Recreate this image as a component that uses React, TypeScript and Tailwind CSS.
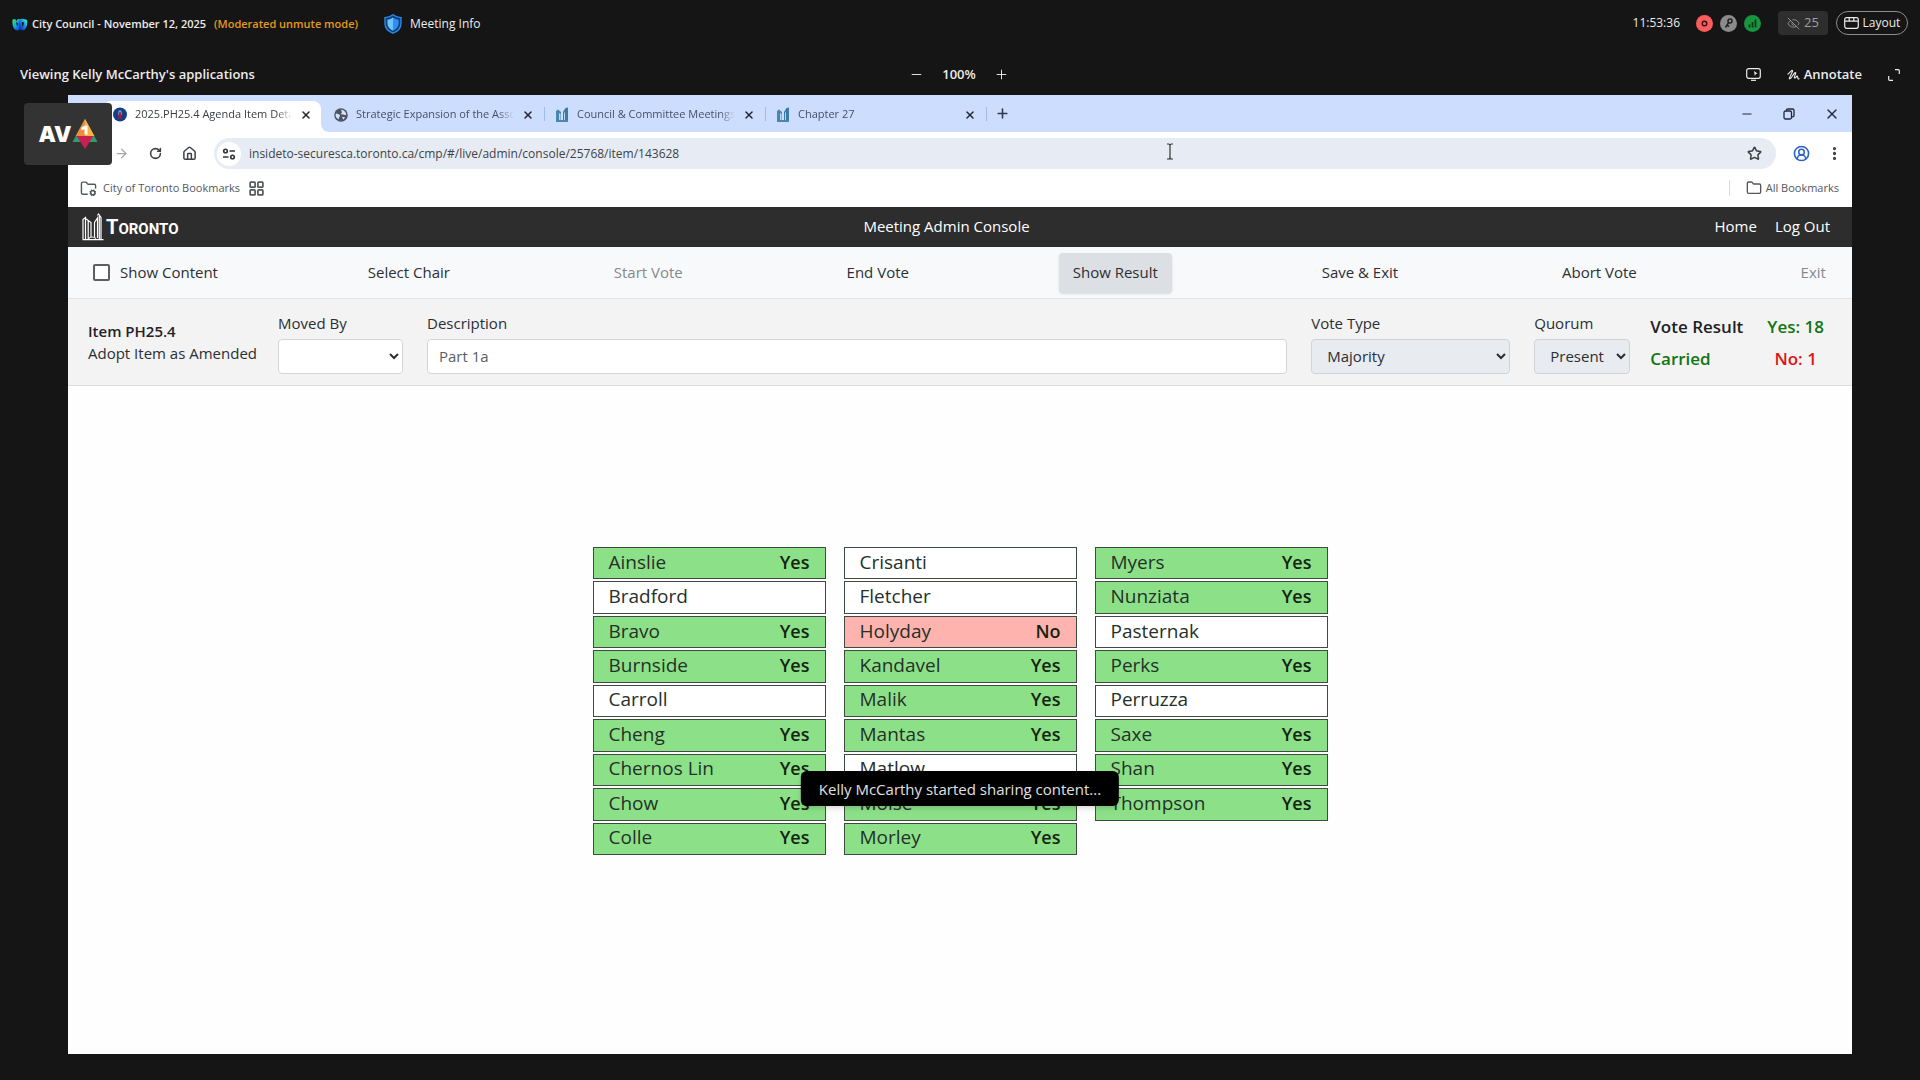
import type { ReactNode } from "react";
import {
  ArrowLeft,
  ArrowRight,
  CircleUserRound,
  EllipsisVertical,
  EyeOff,
  Folder,
  FolderCog,
  House,
  LayoutGrid,
  Minus,
  Plus,
  RotateCw,
  Star,
  X,
} from "lucide-react";

type Vote = "Yes" | "No" | "";

interface Member {
  name: string;
  vote: Vote;
}

const columns: Member[][] = [
  [
    { name: "Ainslie", vote: "Yes" },
    { name: "Bradford", vote: "" },
    { name: "Bravo", vote: "Yes" },
    { name: "Burnside", vote: "Yes" },
    { name: "Carroll", vote: "" },
    { name: "Cheng", vote: "Yes" },
    { name: "Chernos Lin", vote: "Yes" },
    { name: "Chow", vote: "Yes" },
    { name: "Colle", vote: "Yes" },
  ],
  [
    { name: "Crisanti", vote: "" },
    { name: "Fletcher", vote: "" },
    { name: "Holyday", vote: "No" },
    { name: "Kandavel", vote: "Yes" },
    { name: "Malik", vote: "Yes" },
    { name: "Mantas", vote: "Yes" },
    { name: "Matlow", vote: "" },
    { name: "Moise", vote: "Yes" },
    { name: "Morley", vote: "Yes" },
  ],
  [
    { name: "Myers", vote: "Yes" },
    { name: "Nunziata", vote: "Yes" },
    { name: "Pasternak", vote: "" },
    { name: "Perks", vote: "Yes" },
    { name: "Perruzza", vote: "" },
    { name: "Saxe", vote: "Yes" },
    { name: "Shan", vote: "Yes" },
    { name: "Thompson", vote: "Yes" },
  ],
];

const voteColors: Record<Vote, string> = {
  Yes: "bg-[#8ce188]",
  No: "bg-[#ffb3ae]",
  "": "bg-white",
};

function WebexLogo() {
  return (
    <svg width="16" height="13" viewBox="0 0 16 13" aria-hidden="true">
      <defs>
        <linearGradient id="wbxA" x1="0" y1="0" x2="1" y2="1">
          <stop offset="0" stopColor="#35d07f" />
          <stop offset="0.45" stopColor="#12a4e8" />
          <stop offset="1" stopColor="#0b46d8" />
        </linearGradient>
        <linearGradient id="wbxB" x1="1" y1="0" x2="0" y2="1">
          <stop offset="0" stopColor="#2ee0c0" />
          <stop offset="0.5" stopColor="#1d7bf0" />
          <stop offset="1" stopColor="#0a35b8" />
        </linearGradient>
      </defs>
      <path d="M2.200 3C2.300 8 4 10.500 5.400 10.500S7.600 8.200 7.800 5.500S6.800 2.500 6.200 3.200" fill="none" stroke="url(#wbxA)" strokeWidth="3.800" strokeLinecap="round" />
      <path d="M13.600 3.200C13.700 8 12 10.500 10.600 10.500S8.400 8 8.200 5.500S9.200 2.200 10.600 2.400S12.500 3 13.600 3.200" fill="none" stroke="url(#wbxB)" strokeWidth="3.400" strokeLinecap="round" />
    </svg>
  );
}

function ShieldIcon() {
  return (
    <svg width="18" height="20" viewBox="0 0 18 20" aria-hidden="true">
      <path d="M9 .8C11.500 2.600 14 3.500 17 3.700V9.500C17 14 13.500 17.500 9 19.200C4.500 17.500 1 14 1 9.500V3.700C4 3.500 6.500 2.600 9 .8Z" fill="#0f3f78" stroke="#2f8ff0" strokeWidth="1.300" />
      <path d="M9 3.500C10.800 4.800 12.600 5.500 14.600 5.700V9.500C14.600 12.800 12.300 15.300 9 16.700Z" fill="#2f8df5" />
      <path d="M9 3.500C7.200 4.800 5.400 5.500 3.400 5.700V9.500C3.400 12.800 5.700 15.300 9 16.700Z" fill="#6cc4fb" />
    </svg>
  );
}

function Av1Mark() {
  return (
    <svg width="26" height="30" viewBox="0 0 26 30" className="shrink-0" aria-hidden="true">
      <path d="M13 0L25.500 23H.5Z" fill="#2f9e6e" />
      <path d="M13 0L22.300 17H3.700Z" fill="#f08c3a" />
      <path d="M13 0L22.300 17H13Z" fill="#f7b53d" />
      <path d="M4.500 17H21.500L13 30Z" fill="#c8214f" />
      <path d="M9.500 8.500L13 6.500H15.500V15.500H12.500V10L9.500 11.200Z" fill="#fff" />
    </svg>
  );
}

// City hall towers, used for the header logo
function Towers({ className }: { className: string }) {
  return (
    <svg viewBox="0 0 22 28" fill="none" stroke="currentColor" className={className} aria-hidden="true">
      <path d="M1 26V6.500L3.500 4.500V26M3.500 5.500L9 9.500V24M6.200 8V26" strokeWidth="1.200" />
      <path d="M12.500 24V9.500L15.500 5V25M15.500 2.500L16.500 1L19 4.500V26M17.300 3V26" strokeWidth="1.200" />
      <path d="M.5 26.700H21.500M6.500 25.500Q10 22.500 14 25.500" strokeWidth="1.200" />
    </svg>
  );
}

function TorontoFavicon() {
  return (
    <svg width="14" height="15" viewBox="0 0 14 15" aria-hidden="true">
      <path d="M1 14V4L3 2.500L6 5V14Z" fill="#4a87b0" />
      <path d="M8 14V5L10.500 1L13 .5V14Z" fill="#3d7ba6" />
      <path d="M4 6L5.500 7V13H4ZM9 6L10 5V13H9Z" fill="#b9d4ee" />
      <path d="M1 13H13V15H1Z" fill="#4a87b0" />
    </svg>
  );
}

function CrestFavicon() {
  return (
    <svg width="15" height="15" viewBox="0 0 15 15" aria-hidden="true">
      <circle cx="7.500" cy="7.500" r="7.500" fill="#123f86" />
      <path d="M5.500 4.500Q7.500 1.500 9.500 4.500V8H5.500Z" fill="#7f93bd" />
      <path d="M6.500 5H8.500V8Q10 9 9.500 11Q7.500 13 5.500 11Q5 9 6.500 8Z" fill="#b3123c" />
    </svg>
  );
}

function GlobeFavicon() {
  return (
    <svg width="14" height="14" viewBox="0 0 14 14" aria-hidden="true">
      <circle cx="7" cy="7" r="6.800" fill="#4c5563" />
      <path d="M2 5.500C4 6 6 6 6 7.500S4.500 9 5 11.500C3 11 1.500 9 1.500 7ZM7 1.800C9.500 1.500 12 4 12.300 6.500C11 8 10 6 8.500 6.500S6.500 5 8 4.500ZM8 9H11L9.500 11.800Z" fill="#d3e2fb" />
    </svg>
  );
}

function SiteSettingsIcon() {
  return (
    <svg width="14" height="12" viewBox="0 0 14 12" fill="none" stroke="#30343a" strokeWidth="1.600" aria-hidden="true">
      <circle cx="3.500" cy="3" r="1.800" />
      <path d="M7.500 3H13M1 9H6.500" />
      <circle cx="10.500" cy="9" r="1.800" />
    </svg>
  );
}

interface TabProps {
  icon: ReactNode;
  title: string;
  active?: boolean;
}

function BrowserTab({ icon, title, active }: TabProps) {
  return (
    <div
      className={
        active
          ? "relative mr-[3px] flex w-[218px] items-center rounded-t-lg bg-white pr-[9px] pb-1 pl-2.5 text-[#3a3d42]"
          : "relative flex w-[221px] items-center pr-[11px] pb-1 pl-2.5 text-[#42526b]"
      }
    >
      <span className="flex w-[14px] shrink-0 justify-center">{icon}</span>
      <span className="ml-2 min-w-0 flex-1 overflow-hidden text-[11px] whitespace-nowrap [mask-image:linear-gradient(to_right,#000_90%,transparent)]">
        {title}
      </span>
      <button type="button" aria-label={`Close ${title}`} className="ml-2 text-[#23272e]">
        <X size={12} strokeWidth={3} />
      </button>
      {active ? (
        <svg width="9" height="9" viewBox="0 0 9 9" className="absolute bottom-0 left-full" aria-hidden="true">
          <path d="M0 0Q0 9 9 9H0Z" fill="#fff" />
        </svg>
      ) : (
        <span className="absolute top-1.5 right-0 h-[14px] w-px bg-[#9fbbe8]" />
      )}
    </div>
  );
}

function MeetingBar() {
  return (
    <header className="flex h-[46px] items-center justify-between px-3 pt-0.5 text-xs font-medium text-[#ececec]">
      <div className="flex items-center">
        <WebexLogo />
        <span className="ml-1 text-[11px] font-semibold">City Council - November 12, 2025</span>
        <span className="ml-2 text-[11px] font-semibold text-[#e39a1c]">(Moderated unmute mode)</span>
        <button type="button" className="ml-[26px] flex items-center gap-2">
          <ShieldIcon />
          Meeting Info
        </button>
      </div>
      <div className="flex items-center pb-0.5">
        <span>11:53:36</span>
        <span className="ml-4 flex gap-[7px]">
          <svg width="17" height="17" viewBox="0 0 17 17" aria-label="Recording">
            <circle cx="8.500" cy="8.500" r="8.500" fill="#fb5c5c" />
            <circle cx="8.500" cy="8.500" r="2.300" fill="none" stroke="#3a1010" strokeWidth="1.400" />
          </svg>
          <svg width="17" height="17" viewBox="0 0 17 17" aria-label="Encryption">
            <circle cx="8.500" cy="8.500" r="8.500" fill="#8b8b8b" />
            <circle cx="10" cy="6" r="2" fill="none" stroke="#222" strokeWidth="1.500" />
            <path d="M8.700 7.500L5.500 12.500M7 10.200L9 11.500" stroke="#222" strokeWidth="1.500" />
          </svg>
          <svg width="17" height="17" viewBox="0 0 17 17" aria-label="Network">
            <circle cx="8.500" cy="8.500" r="8.500" fill="#17953f" />
            <path d="M5.500 12.500V9.500M8.500 12.500V7M11.500 12.500V4.500" stroke="#0a3517" strokeWidth="1.700" />
          </svg>
        </span>
        <button type="button" className="ml-[17px] flex h-6 w-[50px] items-center justify-center gap-1 rounded bg-[#2e2e2e] text-[13px] font-normal text-[#a0a0a0]">
          <EyeOff size={13} strokeWidth={1.5} />
          25
        </button>
        <button type="button" className="ml-2 flex h-6 w-[72px] items-center justify-center gap-1 rounded-full border border-[#8c8c8c]">
          <svg width="15" height="12" viewBox="0 0 15 12" fill="none" stroke="currentColor" strokeWidth="1.200" aria-hidden="true">
            <rect x="0.700" y="0.700" width="13.600" height="10.600" rx="2" />
            <path d="M.7 4.200H14.300M5.200 .7V4.200M9.800 .7V4.200" />
          </svg>
          Layout
        </button>
      </div>
    </header>
  );
}

function ShareBar() {
  return (
    <div className="grid h-[49px] grid-cols-3 items-center px-5 pt-2 text-[13px] font-semibold text-[#ececec]">
      <span>Viewing Kelly McCarthy's applications</span>
      <div className="flex items-center justify-center gap-[18px] pr-0.5">
        <button type="button" aria-label="Zoom out">
          <Minus size={15} strokeWidth={1.5} />
        </button>
        100%
        <button type="button" aria-label="Zoom in">
          <Plus size={15} strokeWidth={1.5} />
        </button>
      </div>
      <div className="flex items-center justify-end">
        <button type="button" aria-label="Display options">
          <svg width="15" height="13" viewBox="0 0 15 13" fill="none" stroke="currentColor" strokeWidth="1.200" aria-hidden="true">
            <rect x="0.700" y="0.700" width="13.600" height="9.600" rx="2" />
            <path d="M5 12.300H10" />
            <path d="M8 3L11.500 5.500L9.800 6L8.800 8Z" fill="currentColor" stroke="none" />
          </svg>
        </button>
        <button type="button" className="ml-[26px] flex items-center gap-1">
          <svg width="13" height="12" viewBox="0 0 14 12" fill="none" stroke="currentColor" strokeWidth="1.200" strokeLinecap="round" strokeLinejoin="round" aria-hidden="true">
            <path d="M1 5L5 1.200C6.500 .5 6 2 5.500 3L2.500 9.500C2.500 11 4 9.500 5 8.200L8 4C9.500 2.700 9.800 3.800 9 5L8 8C7.500 9.800 9 9.500 10 8S11.500 7.500 11.500 8.500S12 10.500 13 10" />
          </svg>
          Annotate
        </button>
        <button type="button" aria-label="Full screen" className="ml-[26px]">
          <svg width="12" height="12" viewBox="0 0 12 12" fill="none" stroke="currentColor" strokeWidth="1.200" aria-hidden="true">
            <path d="M7 .7H10.300Q11.300 .7 11.300 1.700V5M.7 7V10.300Q.7 11.300 1.700 11.300H5" />
          </svg>
        </button>
      </div>
    </div>
  );
}

function BrowserChrome() {
  return (
    <div>
      <div className="flex h-[37px] items-stretch bg-[#cdddfd] pt-1.5 pl-[35px]">
        <BrowserTab active icon={<CrestFavicon />} title="2025.PH25.4 Agenda Item Details" />
        <BrowserTab icon={<GlobeFavicon />} title="Strategic Expansion of the Association" />
        <BrowserTab icon={<TorontoFavicon />} title="Council & Committee Meetings" />
        <BrowserTab icon={<TorontoFavicon />} title="Chapter 27" />
        <button type="button" aria-label="New tab" className="ml-2 pb-1.5 text-[#2c3a52]">
          <Plus size={15} strokeWidth={2.5} />
        </button>
        <div className="ml-auto flex items-center gap-[29px] pr-3 pb-1.5 text-[#1f2a3d]">
          <button type="button" aria-label="Minimize">
            <Minus size={14} strokeWidth={2} />
          </button>
          <button type="button" aria-label="Restore">
            <svg width="12" height="12" viewBox="0 0 12 12" fill="none" stroke="currentColor" strokeWidth="1.300" aria-hidden="true">
              <rect x="1" y="3" width="7.500" height="8" rx="1.500" />
              <path d="M3.500 3V2.200Q3.500 1 4.700 1H9.500Q11 1 11 2.500V7.500Q11 9 8.500 9" />
            </svg>
          </button>
          <button type="button" aria-label="Close window">
            <X size={16} strokeWidth={2} />
          </button>
        </div>
      </div>

      <div className="flex h-[43px] items-center bg-white px-0.5 text-[#3c4043]">
        <button type="button" aria-label="Back" className="flex w-[34px] justify-center">
          <ArrowLeft size={15} />
        </button>
        <button type="button" aria-label="Forward" className="flex w-[34px] justify-center text-[#a3a6aa]">
          <ArrowRight size={15} />
        </button>
        <button type="button" aria-label="Reload" className="flex w-[34px] justify-center">
          <RotateCw size={13} strokeWidth={2.8} />
        </button>
        <button type="button" aria-label="Home page" className="flex w-[34px] justify-center">
          <House size={15} strokeWidth={2.4} />
        </button>
        <div className="relative ml-2 flex h-[31px] flex-1 items-center rounded-full bg-[#e7ecf4] pr-[14px] pl-[3px]">
          <button type="button" aria-label="Site settings" className="flex size-6 items-center justify-center rounded-full bg-white">
            <SiteSettingsIcon />
          </button>
          <input
            aria-label="Address"
            className="ml-2 flex-1 bg-transparent text-xs text-[#3f4347] outline-none"
            defaultValue="insideto-securesca.toronto.ca/cmp/#/live/admin/console/25768/item/143628"
          />
          <button type="button" aria-label="Bookmark this page">
            <Star size={15} strokeWidth={2.4} />
          </button>
          <svg width="8" height="17" viewBox="0 0 8 17" fill="none" stroke="#333" strokeWidth="1.200" className="absolute top-[5px] left-[952px]" aria-hidden="true">
            <path d="M1 1H2.500Q4 1 4 2.500V14.500Q4 16 2.500 16H1M7 1H5.500Q4 1 4 2.500M4 14.500Q4 16 5.500 16H7" />
          </svg>
        </div>
        <button type="button" aria-label="Profile" className="ml-2 flex w-[34px] justify-center text-[#2a63c4]">
          <CircleUserRound size={17} strokeWidth={2.2} />
        </button>
        <button type="button" aria-label="Browser menu" className="flex w-8 justify-center">
          <EllipsisVertical size={17} strokeWidth={2.6} />
        </button>
      </div>

      <div className="flex h-8 items-center justify-between bg-white pr-[13px] pb-1.5 pl-3 text-[11px] text-[#54585d]">
        <div className="flex items-center">
          <FolderCog size={17} />
          <a href="#" className="ml-1.5">City of Toronto Bookmarks</a>
          <a href="#" aria-label="Apps" className="ml-2">
            <LayoutGrid size={17} strokeWidth={2.4} />
          </a>
        </div>
        <a href="#" className="flex items-center border-l border-[#d5dae2] pl-4">
          <Folder size={16} />
          <span className="ml-1">All Bookmarks</span>
        </a>
      </div>
    </div>
  );
}

function ConsoleHeader() {
  return (
    <div className="flex h-10 items-center justify-between bg-[#2d2d2d] pr-[22px] pl-[14px] text-[15px] text-white">
      <a href="#" className="flex items-end gap-0.5 font-['Roboto',sans-serif] font-bold">
        <Towers className="h-7 w-[22px]" />
        <span className="text-[15px] leading-6">
          <span className="text-[20px]">T</span>ORONTO
        </span>
      </a>
      <h1 className="pb-0.5">Meeting Admin Console</h1>
      <nav className="flex gap-[18px] pb-0.5">
        <a href="#">Home</a>
        <a href="#">Log Out</a>
      </nav>
    </div>
  );
}

function ActionBar() {
  return (
    <div className="flex h-[52px] items-center justify-between border-b border-[#e3e6e8] bg-[#f8f9fb] pr-3 pl-[25px] text-[15px] text-[#2b2f33]">
      <label className="flex items-center gap-2.5">
        <input type="checkbox" className="size-[17px] appearance-none rounded-xs border-2 border-[#5c5f63] bg-white" />
        Show Content
      </label>
      <button type="button" className="h-10 px-[14px]">Select Chair</button>
      <button type="button" disabled className="h-10 px-[14px] text-[#85898d]">Start Vote</button>
      <button type="button" className="h-10 px-[14px]">End Vote</button>
      <button type="button" className="h-10 rounded bg-[#dce0e5] px-[14px] shadow-sm">Show Result</button>
      <button type="button" className="h-10 px-[14px]">Save &amp; Exit</button>
      <button type="button" className="h-10 px-[14px]">Abort Vote</button>
      <button type="button" disabled className="h-10 px-[14px] text-[#85898d]">Exit</button>
    </div>
  );
}

function VoteForm() {
  return (
    <form className="flex h-[87px] items-center border-b border-[#dadcde] bg-[#f3f3f3] pr-7 pl-5 text-[15px] text-[#2b2f33]">
      <div className="w-[190px] leading-[22px]">
        <p className="font-semibold text-[#1f2225]">Item PH25.4</p>
        <p>Adopt Item as Amended</p>
      </div>
      <div className="flex w-[125px] flex-col">
        <label htmlFor="movedBy" className="mb-1 leading-6">Moved By</label>
        <select id="movedBy" className="h-[35px] rounded border border-[#d3d6d9] bg-white px-2">
          <option></option>
        </select>
      </div>
      <div className="ml-6 flex flex-1 flex-col">
        <label htmlFor="description" className="mb-1 leading-6">Description</label>
        <input id="description" defaultValue="Part 1a" className="h-[35px] rounded border border-[#d3d6d9] bg-white px-[11px] text-[#5a5f64]" />
      </div>
      <div className="ml-6 flex w-[199px] flex-col">
        <label htmlFor="voteType" className="mb-1 leading-6">Vote Type</label>
        <select id="voteType" className="h-[35px] rounded border border-[#d0d4d9] bg-[#e8ebef] px-[11px]">
          <option>Majority</option>
        </select>
      </div>
      <div className="ml-6 flex w-24 flex-col">
        <label htmlFor="quorum" className="mb-1 leading-6">Quorum</label>
        <select id="quorum" className="h-[35px] rounded border border-[#d0d4d9] bg-[#e8ebef] pr-1 pl-[11px]">
          <option>Present</option>
        </select>
      </div>
      <div className="ml-5 grid grid-cols-[auto_auto] gap-x-6 pt-px text-[17px] leading-8 font-semibold">
        <span className="text-[#1f2225]">Vote Result</span>
        <span className="text-center text-[#117511]">Yes: 18</span>
        <span className="text-[#117511]">Carried</span>
        <span className="text-center text-[#e01414]">No: 1</span>
      </div>
    </form>
  );
}

export default function App() {
  return (
    <div className="relative flex min-h-screen flex-col bg-[#151515] pb-[26px] font-['Open_Sans','Noto_Sans',sans-serif]">
      <MeetingBar />
      <ShareBar />

      <main className="mx-[68px] flex flex-1 flex-col bg-[#fdfefd]">
        <BrowserChrome />
        <ConsoleHeader />
        <ActionBar />
        <VoteForm />

        <section className="relative flex flex-1 justify-center gap-[18px] pt-[161px]">
          {columns.map((members, i) => (
            <ul key={i} className="grid h-[308px] w-[233px] grid-rows-9 gap-y-0.5">
              {members.map((member) => (
                <li
                  key={member.name}
                  className={`flex items-center justify-between border border-[#3f4a40] px-[15px] pb-[3px] text-[19px] leading-6 text-[#25302a] ${voteColors[member.vote]}`}
                >
                  <span>{member.name}</span>
                  <span className="text-lg leading-6 font-semibold text-[#15240f]">{member.vote}</span>
                </li>
              ))}
            </ul>
          ))}

          <div role="status" className="absolute top-[385px] left-1/2 flex h-[35px] -translate-x-1/2 items-center rounded-md bg-black px-[18px] pt-0.5 text-[15px] whitespace-nowrap text-[#e0e0e0] shadow-md">
            Kelly McCarthy started sharing content...
          </div>
        </section>
      </main>

      <div className="absolute top-[103px] left-6 flex h-[62px] w-[88px] items-center justify-center rounded bg-[#333333]">
        <span className="font-['Inter',sans-serif] text-[22px] font-black text-white">AV</span>
        <Av1Mark />
      </div>
    </div>
  );
}
